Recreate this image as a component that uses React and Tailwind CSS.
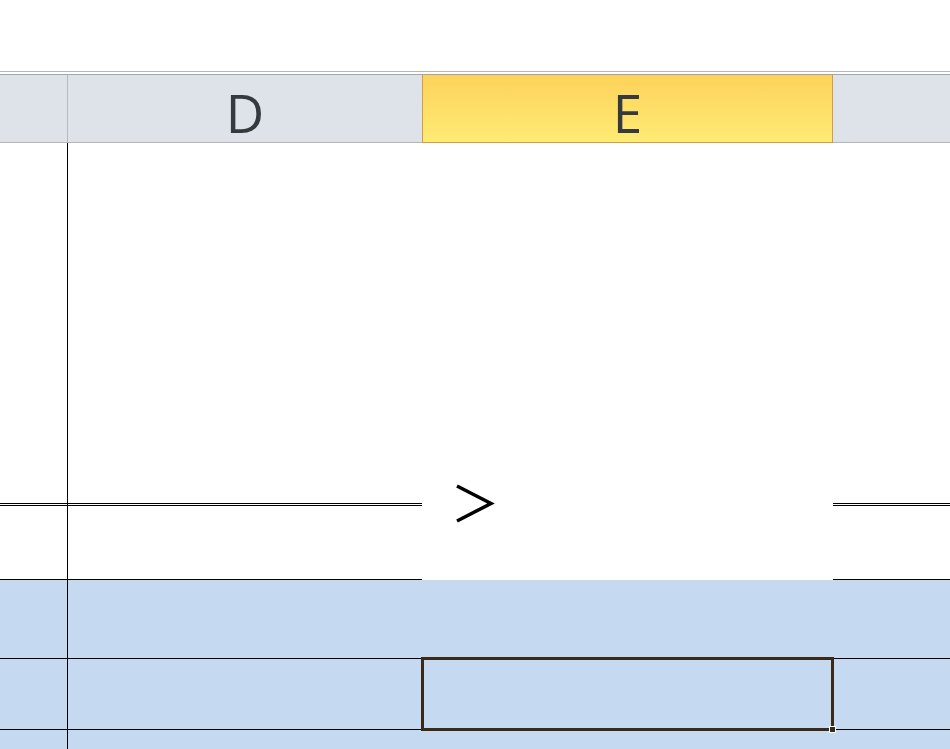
export default function App() {
  const font = { fontFamily: '"Open Sans", "Liberation Sans", sans-serif' };
  return (
    <div className="w-[950px] h-[749px] overflow-hidden bg-white flex flex-col">
      {/* top blank */}
      <div className="h-[71px] shrink-0 bg-white" />
      <div className="h-px shrink-0 bg-[#b4b8be]" />
      <div className="h-[2px] shrink-0 bg-white" />
      <div className="h-px shrink-0 bg-[#a2a6ac]" />
      {/* column header row */}
      <div className="h-[68px] shrink-0 flex bg-[#dee2e9] border-b border-[#b3b7bd]" style={font}>
        <div className="w-[67px] shrink-0" />
        <div className="w-px shrink-0 bg-[#b6bac0]" />
        <div className="w-[354px] shrink-0 flex items-start justify-center pt-[11px] text-[53px] leading-none text-[#353a3f]">
          <span>D</span>
        </div>
        <div className="w-[411px] shrink-0 flex items-start justify-center pt-[11px] text-[53px] leading-none text-[#353a3f] bg-gradient-to-b from-[#fdd25a] to-[#feeb74] border-x border-[#d39c45] -mb-px border-b">
          <span>E</span>
        </div>
        <div className="flex-1" />
      </div>

      {/* row 1 */}
      <div className="h-[363px] shrink-0 flex">
        <div className="w-[67px] shrink-0 border-b-[3px] border-double border-black" />
        <div className="w-px shrink-0 bg-black" />
        <div className="w-[354px] shrink-0 border-b-[3px] border-double border-black" />
        <div className="w-[411px] shrink-0 bg-white relative">
          <svg className="absolute left-[33px] top-[340px]" width="40" height="42" viewBox="0 0 40 42">
            <polyline points="2,3 36,20.5 2,38" fill="none" stroke="#000" strokeWidth="3.5" strokeLinejoin="miter" />
          </svg>
        </div>
        <div className="flex-1 border-b-[3px] border-double border-black" />
      </div>

      {/* row 2 */}
      <div className="h-[74px] shrink-0 flex">
        <div className="w-[67px] shrink-0 border-b border-black" />
        <div className="w-px shrink-0 bg-black" />
        <div className="w-[354px] shrink-0 border-b border-black" />
        <div className="w-[411px] shrink-0 bg-white" />
        <div className="flex-1 border-b border-black" />
      </div>

      {/* row 3 */}
      <div className="h-[79px] shrink-0 flex bg-[#c5d9f1] border-b border-black">
        <div className="w-[67px] shrink-0" />
        <div className="w-px shrink-0 bg-black" />
        <div className="flex-1" />
      </div>

      {/* row 4 */}
      <div className="h-[71px] shrink-0 flex bg-[#c5d9f1] border-b border-black">
        <div className="w-[67px] shrink-0" />
        <div className="w-px shrink-0 bg-black" />
        <div className="w-[354px] shrink-0" />
        <div className="w-[411px] shrink-0 relative">
          <div className="absolute left-[-1px] top-[-2px] w-[413px] h-[74px] border-[3px] border-[#3b2a17]" />
          <div className="absolute left-[407px] top-[67px] w-[7px] h-[7px] bg-[#3b2a17] border border-white" />
        </div>
        <div className="flex-1" />
      </div>

      {/* row 5 */}
      <div className="flex-1 flex bg-[#c5d9f1]">
        <div className="w-[67px] shrink-0" />
        <div className="w-px shrink-0 bg-black" />
        <div className="flex-1" />
      </div>
    </div>
  );
}
